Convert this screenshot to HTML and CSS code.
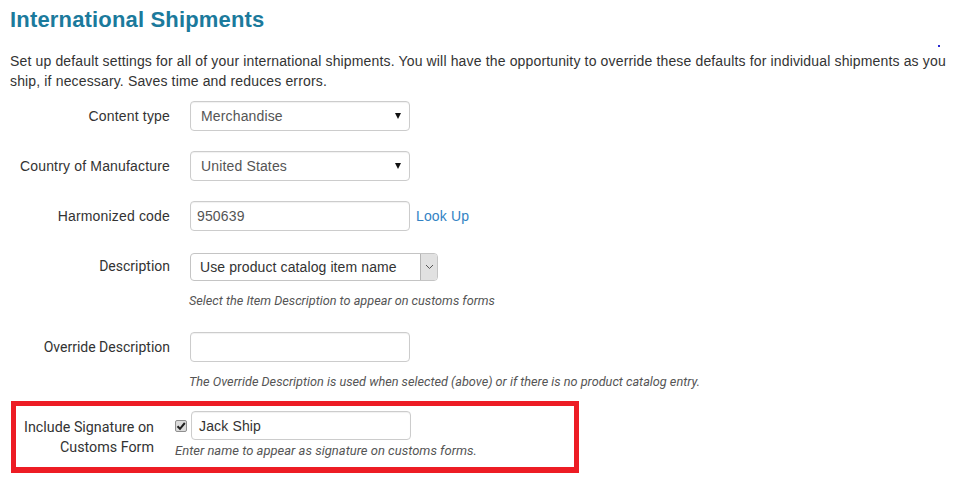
FILE: index.html
```html
<!DOCTYPE html>
<html>
<head>
<meta charset="utf-8">
<title>International Shipments</title>
<link rel="stylesheet" href="styles.css">
</head>
<body>
<div class="page">
  <h1 class="title">International Shipments</h1>
  <div class="marker"><span class="dot"></span></div>
  <p class="intro">Set up default settings for all of your international shipments. You will have the opportunity to override these defaults for individual shipments as you ship, if necessary. Saves time and reduces errors.</p>

  <div class="row row-content">
    <label class="label">Content type</label>
    <div class="select">
      <span class="select-text">Merchandise</span>
      <span class="caret"></span>
    </div>
  </div>

  <div class="row row-country">
    <label class="label">Country of Manufacture</label>
    <div class="select">
      <span class="select-text">United States</span>
      <span class="caret"></span>
    </div>
  </div>

  <div class="row row-code">
    <label class="label">Harmonized code</label>
    <div class="input">950639</div>
    <a class="lookup" href="#">Look Up</a>
  </div>

  <div class="row row-desc">
    <label class="label label-r">Description</label>
    <div class="native-select">
      <span class="native-text">Use product catalog item name</span>
      <span class="native-btn">
        <svg width="9" height="6" viewBox="0 0 9 6"><path d="M1 1 L4.5 4.5 L8 1" fill="none" stroke="#555" stroke-width="1"/></svg>
      </span>
    </div>
  </div>
  <div class="help help-desc">Select the Item Description to appear on customs forms</div>

  <div class="row row-override">
    <label class="label label-r">Override Description</label>
    <div class="input"></div>
  </div>
  <div class="help help-override">The Override Description is used when selected (above) or if there is no product catalog entry.</div>

  <div class="highlight">
    <label class="sig-label">Include Signature on Customs Form</label>
    <div class="sig-body">
      <div class="sig-line">
        <span class="checkbox">
          <svg width="10" height="10" viewBox="0 0 10 10"><path d="M1.5 5.2 L4 7.8 L8.8 2" fill="none" stroke="#222" stroke-width="2"/></svg>
        </span>
        <div class="input input-sig">Jack Ship</div>
      </div>
      <div class="help help-sig">Enter name to appear as signature on customs forms.</div>
    </div>
  </div>
</div>
</body>
</html>
```

FILE: styles.css
```css
html, body {
  margin: 0;
  padding: 0;
  background: #ffffff;
}

body {
  font-family: "Liberation Sans", Arial, sans-serif;
  font-size: 14px;
  color: #333333;
  letter-spacing: 0.15px;
}

.page {
  padding-left: 10px;
  width: 940px;
}

.title {
  margin: 0;
  padding-top: 7px;
  font-size: 22px;
  line-height: 26px;
  font-weight: bold;
  color: #1b7a9c;
  letter-spacing: 0.17px;
}

.marker {
  display: flex;
  justify-content: flex-end;
  height: 0;
  padding-right: 10px;
}

.dot {
  display: block;
  width: 2px;
  height: 2px;
  margin-top: 12px;
  background: #2a2ad0;
}

.intro {
  margin: 18px 0 10px;
  line-height: 20px;
  font-size: 14px;
  color: #333333;
}

.row {
  display: flex;
  align-items: center;
  gap: 20px;
}

.label {
  width: 160px;
  text-align: right;
  font-size: 14px;
  line-height: 20px;
  color: #333333;
  letter-spacing: 0.17px;
}

.label-r {
  font-family: Roboto, "Liberation Sans", sans-serif;
  letter-spacing: 0;
}

.row-content,
.row-country {
  margin-bottom: 20px;
}

.row-code {
  margin-bottom: 20px;
}

.select {
  box-sizing: border-box;
  width: 220px;
  height: 30px;
  border: 1px solid #cccccc;
  border-radius: 4px;
  display: flex;
  align-items: center;
  justify-content: space-between;
  padding: 0 6px 0 10px;
  box-shadow: inset 0 1px 1px rgba(0, 0, 0, 0.06);
}

.select-text {
  color: #555555;
  font-size: 14px;
}

.caret {
  width: 0;
  height: 0;
  border-left: 3px solid transparent;
  border-right: 3px solid transparent;
  border-top: 6px solid #111111;
  margin-right: 2px;
}

.input {
  box-sizing: border-box;
  width: 220px;
  height: 30px;
  border: 1px solid #cccccc;
  border-radius: 4px;
  padding: 0 7px 0 6px;
  display: flex;
  align-items: center;
  color: #555555;
  font-size: 14px;
  box-shadow: inset 0 1px 1px rgba(0, 0, 0, 0.06);
}

.row-code {
  gap: 0;
}

.row-code .input {
  margin-left: 20px;
}

.lookup {
  margin-left: 6px;
  margin-top: -1px;
  color: #3383c4;
  text-decoration: none;
  font-size: 14px;
}

.native-select {
  box-sizing: border-box;
  width: 248px;
  height: 28px;
  margin-top: 2px;
  border: 1px solid #c4c4c4;
  border-radius: 4px;
  display: flex;
  align-items: stretch;
  overflow: hidden;
}

.native-text {
  flex: 1;
  display: flex;
  align-items: center;
  padding-left: 9px;
  font-size: 14px;
  letter-spacing: 0.1px;
  color: #333333;
}

.native-btn {
  width: 16px;
  background: #e1e1e1;
  border-left: 1px solid #b5b5b5;
  display: flex;
  align-items: center;
  justify-content: center;
}

.help {
  font-family: Roboto, "Liberation Sans", sans-serif;
  font-style: italic;
  font-size: 12.7px;
  line-height: 16px;
  letter-spacing: 0;
  color: #555555;
}

.help-desc {
  margin: 12px 0 0 179px;
}

.row-override {
  margin-top: 23px;
}

.help-override {
  margin: 12px 0 0 179px;
}

.highlight {
  box-sizing: border-box;
  width: 568px;
  margin: 11px 0 0 1px;
  border: 5px solid #ed1c24;
  border-bottom-width: 6px;
  padding: 5px 0 8px;
  display: flex;
  align-items: flex-start;
}

.sig-label {
  width: 138px;
  margin-top: 6px;
  text-align: right;
  font-family: Roboto, "Liberation Sans", sans-serif;
  font-size: 14.3px;
  line-height: 20px;
  letter-spacing: 0;
  color: #333333;
}

.sig-body {
  margin-left: 21px;
}

.sig-line {
  display: flex;
  align-items: center;
  gap: 4px;
}

.checkbox {
  box-sizing: border-box;
  width: 12px;
  height: 12px;
  border: 1px solid #8f8f8f;
  border-radius: 2px;
  background: #dcdcdc;
  display: flex;
  align-items: center;
  justify-content: center;
}

.input-sig {
  height: 29px;
  padding-left: 7px;
  font-size: 14px;
  color: #333333;
}

.help-sig {
  margin-top: 3px;
  font-size: 13px;
}
```
